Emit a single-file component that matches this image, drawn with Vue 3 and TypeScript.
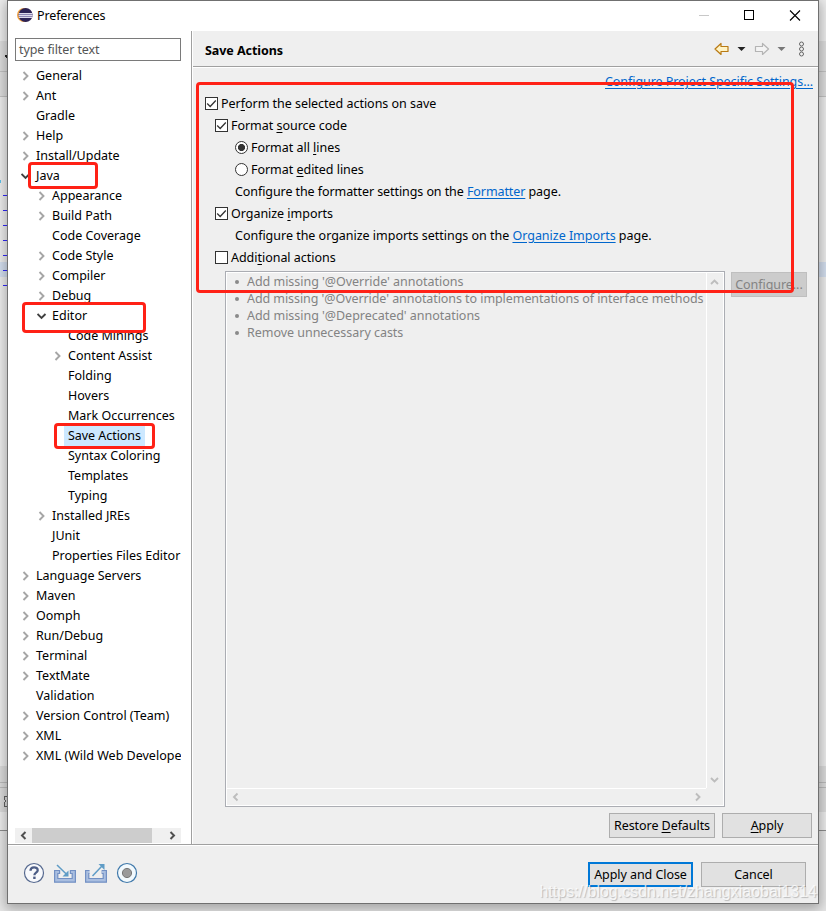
<script setup lang="ts">
interface Node {
  label: string
  level: number
  state: 'open' | 'closed' | 'leaf'
  selected?: boolean
}

const n = (label: string, level: number, state: Node['state'] = 'closed', selected = false): Node => ({
  label,
  level,
  state,
  selected,
})

const nodes: Node[] = [
  n('General', 0),
  n('Ant', 0),
  n('Gradle', 0, 'leaf'),
  n('Help', 0),
  n('Install/Update', 0),
  n('Java', 0, 'open'),
  n('Appearance', 1),
  n('Build Path', 1),
  n('Code Coverage', 1, 'leaf'),
  n('Code Style', 1),
  n('Compiler', 1),
  n('Debug', 1),
  n('Editor', 1, 'open'),
  n('Code Minings', 2, 'leaf'),
  n('Content Assist', 2),
  n('Folding', 2, 'leaf'),
  n('Hovers', 2, 'leaf'),
  n('Mark Occurrences', 2, 'leaf'),
  n('Save Actions', 2, 'leaf', true),
  n('Syntax Coloring', 2, 'leaf'),
  n('Templates', 2, 'leaf'),
  n('Typing', 2, 'leaf'),
  n('Installed JREs', 1),
  n('JUnit', 1, 'leaf'),
  n('Properties Files Editor', 1, 'leaf'),
  n('Language Servers', 0),
  n('Maven', 0),
  n('Oomph', 0),
  n('Run/Debug', 0),
  n('Terminal', 0),
  n('TextMate', 0),
  n('Validation', 0, 'leaf'),
  n('Version Control (Team)', 0),
  n('XML', 0),
  n('XML (Wild Web Develope', 0),
]

const actions: string[] = [
  "Add missing '@Override' annotations",
  "Add missing '@Override' annotations to implementations of interface methods",
  "Add missing '@Deprecated' annotations",
  'Remove unnecessary casts',
]

const dashes: number[] = [195, 210, 225, 240, 255, 270, 285]
</script>

<template>
  <div class="desktop">
    <svg class="backdrop" width="826" height="911" viewBox="0 0 826 911" shape-rendering="crispEdges">
      <rect width="826" height="911" fill="#efefef" />
      <rect y="41" width="826" height="56" fill="#e0e0e0" />
      <rect y="71" width="826" height="1" fill="#c4c4c4" />
      <rect y="96" width="826" height="1" fill="#c4c4c4" />
      <rect y="262" width="826" height="15" fill="#d6e1f1" />
      <rect y="766" width="826" height="46" fill="#dedede" />
      <rect y="782" width="826" height="1" fill="#bdbdbd" />
      <rect y="787" width="826" height="1" fill="#bdbdbd" />
      <rect y="830" width="826" height="1" fill="#8f8f8f" />
      <rect y="831" width="826" height="80" fill="#e8e8e8" />
      <path d="M5 55h3v2h-1v1h-1v-1h-1z" fill="#222" />
      <rect x="0" y="180" width="1" height="3" fill="#5cc4ee" />
      <path d="M4 796h4M4 796v3l2 2l-2 2v3h4" fill="none" stroke="#666" />
    </svg>

    <section class="window">
      <header class="titlebar">
        <svg class="logo" width="16" height="16" viewBox="0 0 16 16">
          <circle cx="7" cy="7" r="7" fill="#f0a040" />
          <circle cx="8.600" cy="7" r="7" fill="#2c2255" />
          <path d="M1.800 5.500h13.600M1.600 7.500h14M2 9.500h13.200" stroke="#dcd9ea" stroke-width="1" />
          <path d="M1.600 6.500h14M1.800 8.500h13.600" stroke="#8d86b4" stroke-width="1" />
        </svg>
        <span class="title">Preferences</span>
        <svg class="winctl" width="110" height="30" viewBox="0 0 110 30" fill="none">
          <path d="M7 14.500h10" stroke="#c8c8c8" />
          <rect x="52.500" y="9.500" width="9" height="9" stroke="#000" />
          <path d="M98 9.500l10 10M108 9.500l-10 10" stroke="#000" stroke-width="1.100" />
        </svg>
      </header>

      <div class="body">
        <aside class="side">
          <div class="filter">type filter text</div>
          <div class="tree">
            <div v-for="node in nodes" :key="node.label" class="row" :class="'l' + node.level">
              <svg class="twisty" width="10" height="10" viewBox="0 0 10 10" fill="none">
                <path v-if="node.state === 'closed'" d="M2.500 1L6.500 5L2.500 9" stroke="#a6a6a6" stroke-width="1.900" />
                <path v-if="node.state === 'open'" d="M.500 3L4.500 7L8.500 3" stroke="#404040" stroke-width="1.900" />
              </svg>
              <span class="label" :class="{ sel: node.selected }">{{ node.label }}</span>
            </div>
          </div>
          <div class="hbar">
            <svg width="17" height="15" viewBox="0 0 17 15" fill="none"><path d="M10.500 4L7 7.500L10.500 11" stroke="#505050" stroke-width="2" /></svg>
            <div class="thumb"></div>
            <svg width="17" height="15" viewBox="0 0 17 15" fill="none"><path d="M6.500 4L10 7.500L6.500 11" stroke="#505050" stroke-width="2" /></svg>
          </div>
        </aside>

        <main class="page">
          <div class="pagehead">
            <h1>Save Actions</h1>
            <svg width="96" height="20" viewBox="0 0 96 20">
              <path d="M1 10l6-5.500v3h7v5h-7v3z" fill="#fff3c4" stroke="#b97a14" stroke-width="1.200" stroke-linejoin="round" />
              <path d="M23.500 8h8l-4 4z" fill="#222" />
              <path d="M54.500 10l-6-5.500v3h-7v5h7v3z" fill="#f4f4f4" stroke="#b4b4b4" stroke-width="1.200" stroke-linejoin="round" />
              <path d="M63.500 8h8l-4 4z" fill="#777" />
              <g fill="none" stroke="#666" stroke-width="1"><circle cx="87.500" cy="5" r="2" /><circle cx="87.500" cy="10" r="2" /><circle cx="87.500" cy="15" r="2" /></g>
            </svg>
          </div>

          <div class="content">
            <a class="link project">Configure Project Specific Settings...</a>
            <div class="opt o0"><i class="box on"><svg width="11" height="11" viewBox="0 0 11 11"><path d="M1.200 5.500l3 3l5.600-6" /></svg></i><span>Per<u>f</u>orm the selected actions on save</span></div>
            <div class="opt o1"><i class="box on"><svg width="11" height="11" viewBox="0 0 11 11"><path d="M1.200 5.500l3 3l5.600-6" /></svg></i><span>Format <u>s</u>ource code</span></div>
            <div class="opt o2"><i class="radio on"></i><span>Format all <u>l</u>ines</span></div>
            <div class="opt o2"><i class="radio"></i><span>Format <u>e</u>dited lines</span></div>
            <div class="opt o2 tight"><span>Configure the formatter settings on the <a class="link">Formatter</a> page.</span></div>
            <div class="opt o1"><i class="box on"><svg width="11" height="11" viewBox="0 0 11 11"><path d="M1.200 5.500l3 3l5.600-6" /></svg></i><span>Organize <u>i</u>mports</span></div>
            <div class="opt o2 snug"><span>Configure the organize imports settings on the <a class="link">Organize Imports</a> page.</span></div>
            <div class="opt o1"><i class="box"></i><span>Addi<u>t</u>ional actions</span></div>

            <div class="extra">
              <div class="list">
                <div class="items">
                  <div v-for="a in actions" :key="a" class="item"><b></b><span>{{ a }}</span></div>
                </div>
                <div class="vbar">
                  <svg width="16" height="18" viewBox="0 0 16 18"><path d="M4 11L7.500 7.500L11 11" /></svg>
                  <svg width="16" height="18" viewBox="0 0 16 18"><path d="M4 8L7.500 11.500L11 8" /></svg>
                </div>
                <div class="lbar">
                  <svg width="18" height="16" viewBox="0 0 18 16"><path d="M10.500 4.500L7 8L10.500 11.500" /></svg>
                  <svg width="18" height="16" viewBox="0 0 18 16"><path d="M8 4.500L11.500 8L8 11.500" /></svg>
                </div>
              </div>
              <button class="btn configure" disabled>Configure...</button>
            </div>

            <div class="pagebtns">
              <button class="btn restore"><span>Restore <u>D</u>efaults</span></button>
              <button class="btn apply"><span><u>A</u>pply</span></button>
            </div>
          </div>
        </main>
      </div>

      <footer class="foot">
        <div class="tools">
          <svg width="22" height="22" viewBox="0 0 22 22">
            <circle cx="11" cy="11" r="9.500" fill="#f8f9fc" stroke="#56698f" stroke-width="1.200" />
            <path d="M7.500 8.800c0-4.600 7.200-4.400 7.200-.6c0 2.500-3.300 2.400-3.300 5" fill="none" stroke="#4c5d86" stroke-width="2.300" />
            <rect x="10.200" y="14.600" width="2.400" height="2.400" fill="#4c5d86" />
          </svg>
          <svg width="24" height="22" viewBox="0 0 24 22">
            <path d="M1.600 8.500h5v3h-1.800v5h14.400v-5h-1.800v-3h5v11.700h-20.800z" fill="#a9bee0" stroke="#7290c4" stroke-width="1.200" />
            <path d="M4 3l9.500 9.300" fill="none" stroke="#5f9cc6" stroke-width="1.500" />
            <path d="M15.500 14.500h-6l6-6z" fill="#5f9cc6" />
          </svg>
          <svg width="24" height="22" viewBox="0 0 24 22">
            <path d="M1.600 8.500h5v3h-1.800v5h14.400v-5h-1.800v-3h5v11.700h-20.800z" fill="#a9bee0" stroke="#7290c4" stroke-width="1.200" />
            <path d="M5.600 6.500h12v6h-12z" fill="#efefef" />
            <path d="M8.500 14L18 4" fill="none" stroke="#5f9cc6" stroke-width="1.500" />
            <path d="M14.500 2h6v6z" fill="#5f9cc6" />
          </svg>
          <svg width="22" height="22" viewBox="0 0 22 22">
            <circle cx="11" cy="11" r="9.500" fill="#f2f9fd" stroke="#3f78aa" stroke-width="1.200" />
            <circle cx="11" cy="11" r="4.600" fill="#9a9a9a" stroke="#777" stroke-width="1" />
          </svg>
        </div>
        <div class="footbtns">
          <button class="btn primary">Apply and Close</button>
          <button class="btn cancel">Cancel</button>
        </div>
      </footer>
    </section>

    <svg class="backdrop" width="7" height="911" viewBox="0 0 7 911" shape-rendering="crispEdges">
      <rect v-for="y in dashes" :key="y" x="3" :y="y" width="4" height="1" fill="#2a22d8" />
    </svg>
    <div class="mark m-options"></div>
    <div class="mark m-java"></div>
    <div class="mark m-editor"></div>
    <div class="mark m-save"></div>
    <div class="watermark">https://blog.csdn.net/zhangxiaobai1314</div>
  </div>
</template>

<style>
body {
  overflow: hidden;
}
</style>

<style scoped>
* {
  box-sizing: border-box;
}
.desktop {
  position: relative;
  width: 826px;
  height: 911px;
  overflow: hidden;
  padding-left: 7px;
  font-family: 'Noto Sans', 'Open Sans', sans-serif;
  font-size: 12.5px;
  color: #000;
}
.desktop svg {
  display: block;
  flex: none;
}
.backdrop {
  position: absolute;
  left: 0;
  top: 0;
}
.window {
  position: relative;
  display: flex;
  flex-direction: column;
  width: 812px;
  height: 904px;
  border: 1px solid #707070;
  background: #efefef;
  box-shadow: 0 3px 12px 2px rgba(0, 0, 0, 0.3);
}
.titlebar {
  display: flex;
  align-items: center;
  height: 30px;
  flex: none;
  padding: 0 9px;
  background: #fff;
}
.title {
  margin-left: 4px;
  margin-top: -1px;
  flex: 1;
  letter-spacing: -0.12px;
}
.winctl {
  margin-right: 7px;
}
.body {
  display: flex;
  height: 813px;
  flex: none;
}
.side {
  width: 183px;
  flex: none;
  padding: 7px 0 0 7px;
  background: #fff;
}
.filter {
  width: 166px;
  height: 23px;
  border: 1px solid #7a7a7a;
  padding-left: 3px;
  line-height: 21px;
  letter-spacing: -0.1px;
  color: #555;
}
.tree {
  width: 166px;
  height: 762px;
  margin-top: 5px;
  overflow: hidden;
}
.row {
  display: flex;
  align-items: center;
  height: 20px;
  white-space: nowrap;
}
.l0 {
  padding-left: 6px;
}
.l1 {
  padding-left: 22px;
}
.l2 {
  padding-left: 38px;
}
.label {
  margin-left: 1px;
  padding: 0 4px;
  line-height: 20px;
}
.row:last-child .label {
  padding-right: 0;
}
.sel {
  letter-spacing: -0.05px;
  background: #cce8ff;
}
.hbar {
  display: flex;
  width: 166px;
  height: 15px;
  background: #f0f0f0;
}
.thumb {
  width: 120px;
  margin-right: 12px;
  background: #cdcdcd;
}
.page {
  display: flex;
  flex-direction: column;
  flex: 1;
  border-left: 1px solid #a0a0a0;
  box-shadow: inset 1px 0 #fff;
}
.pagehead {
  display: flex;
  align-items: center;
  justify-content: space-between;
  height: 37px;
  flex: none;
  margin-left: 1px;
  padding: 0 8px 0 12px;
  border-bottom: 1px solid #fff;
  box-shadow: inset 0 -1px #a0a0a0;
}
h1 {
  margin: 2px 0 0;
  font-size: 12.5px;
  font-weight: 700;
  letter-spacing: -0.06px;
}
.content {
  display: flex;
  flex-direction: column;
  padding: 3px 6px 0 13px;
}
.link {
  color: #0066cc;
  text-decoration: underline;
  text-underline-offset: 2px;
  text-decoration-thickness: 1px;
}
.project {
  align-self: flex-end;
  height: 21px;
  margin-right: -1px;
  line-height: 21px;
  letter-spacing: -0.07px;
  white-space: nowrap;
}
.opt {
  display: flex;
  align-items: center;
  height: 22px;
  letter-spacing: -0.03px;
  white-space: nowrap;
}
.tight {
  letter-spacing: -0.08px;
}
.snug {
  letter-spacing: -0.02px;
}
.o1 {
  padding-left: 10px;
}
.o2 {
  padding-left: 30px;
}
u {
  text-decoration-thickness: 1px;
  text-underline-offset: 2px;
}
.box,
.radio {
  width: 13px;
  height: 13px;
  flex: none;
  margin-right: 3px;
  border: 1px solid #333;
  background: #fff;
}
.box path {
  fill: none;
  stroke: #333;
  stroke-width: 1.3;
}
.radio {
  border-radius: 50%;
}
.radio.on {
  background: radial-gradient(circle, #333 0 3.2px, #fff 3.9px);
}
.extra {
  display: flex;
  align-items: flex-start;
  margin: 3px 0 0 20px;
}
.list {
  display: grid;
  grid-template: 515px 17px / 479px 18px;
  width: 500px;
  height: 536px;
  padding: 1px;
  border: 1px solid #abadb3;
  background: #efefef;
  box-shadow: inset 0 0 0 1px #fff;
}
.items {
  min-width: 0;
}
.item {
  display: flex;
  align-items: center;
  height: 17px;
  letter-spacing: -0.03px;
  color: #838383;
  white-space: nowrap;
}
.item:nth-child(2) {
  letter-spacing: -0.07px;
}
.item b {
  width: 4px;
  height: 4px;
  flex: none;
  margin: 1px 8px 0 8px;
  border-radius: 50%;
  background: #8a8a8a;
}
.list svg path {
  fill: none;
  stroke: #bdbdbd;
  stroke-width: 1.9;
}
.vbar {
  display: flex;
  flex-direction: column;
  justify-content: space-between;
  border-left: 1px solid #fff;
}
.lbar {
  display: flex;
  justify-content: space-between;
  border-top: 1px solid #fff;
}
.btn {
  display: flex;
  align-items: center;
  justify-content: center;
  height: 25px;
  padding: 0;
  border: 1px solid #adadad;
  background: #e1e1e1;
  font: inherit;
  letter-spacing: -0.06px;
  color: #000;
  white-space: nowrap;
}
.configure {
  width: 76px;
  margin: 1px 0 0 6px;
  border-color: #bfbfbf;
  background: #ccc;
  color: #838383;
}
.pagebtns {
  display: flex;
  justify-content: flex-end;
  gap: 7px;
  margin-top: 6px;
}
.restore {
  width: 106px;
}
.apply {
  width: 90px;
}
.foot {
  display: flex;
  justify-content: space-between;
  flex: 1;
  padding: 16px 12px 0 15px;
  border-top: 1px solid #a0a0a0;
  box-shadow: inset 0 1px #fff;
}
.tools {
  display: flex;
  gap: 7.5px;
  padding-top: 1px;
}
.footbtns {
  display: flex;
  gap: 8px;
  padding-top: 1px;
}
.primary {
  width: 105px;
  border: 2px solid #0078d7;
}
.cancel {
  width: 105px;
}
.mark {
  position: absolute;
  border: 3px solid #ff2116;
  border-radius: 4px;
}
.m-options {
  left: 196px;
  top: 82px;
  width: 598px;
  height: 211px;
}
.m-java {
  left: 28px;
  top: 162px;
  width: 70px;
  height: 27px;
}
.m-editor {
  left: 22px;
  top: 302px;
  width: 124px;
  height: 31px;
}
.m-save {
  left: 54px;
  top: 423px;
  width: 101px;
  height: 26px;
}
.watermark {
  position: absolute;
  right: 9px;
  top: 882px;
  font: 16px/20px 'Liberation Sans', sans-serif;
  color: rgba(255, 255, 255, 0.75);
  text-shadow: 1px 1px 1px rgba(0, 0, 0, 0.22);
  white-space: nowrap;
}
</style>
